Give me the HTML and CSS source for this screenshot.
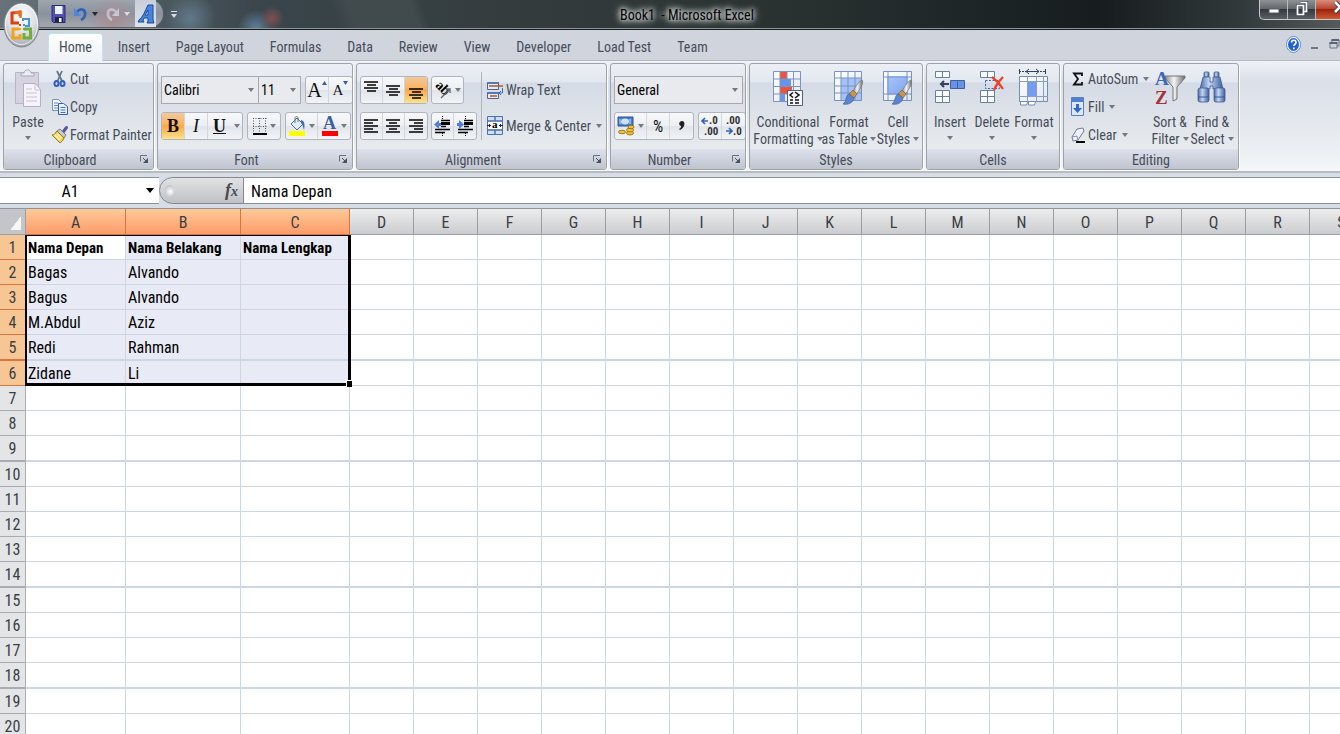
FILE: index.html
```html
<!DOCTYPE html>
<html lang="en">
<head>
<meta charset="utf-8">
<title>Book1 - Microsoft Excel</title>
<link rel="stylesheet" href="styles.css">
</head>
<body>
<svg class="defs" aria-hidden="true">
  <defs>
    <linearGradient id="gCell" x1="0" y1="0" x2="1" y2="1"><stop offset="0" stop-color="#fff"/><stop offset="1" stop-color="#dfe6f2"/></linearGradient>
    <linearGradient id="gSel" x1="0" y1="0" x2="1" y2="1"><stop offset="0" stop-color="#a9c4fa"/><stop offset="1" stop-color="#7ea4ee"/></linearGradient>
    <linearGradient id="gSteel" x1="0" y1="0" x2="1" y2="0"><stop offset="0" stop-color="#8c8c8c"/><stop offset=".45" stop-color="#f4f4f4"/><stop offset="1" stop-color="#6d6d6d"/></linearGradient>
    <linearGradient id="gBarrel" x1="0" y1="0" x2="1" y2="0"><stop offset="0" stop-color="#4b6ba8"/><stop offset=".4" stop-color="#c4d6f6"/><stop offset="1" stop-color="#3d5d9c"/></linearGradient>
    <radialGradient id="gOrb" cx=".5" cy=".3" r=".7"><stop offset="0" stop-color="#fff"/><stop offset=".6" stop-color="#dcdee2"/><stop offset="1" stop-color="#9da2ab"/></radialGradient>
    <symbol id="launcher" viewBox="0 0 9 9"><path d="M.5 6.500V.5H7" fill="none" stroke="#6b7382"/><path d="M3 3l4 4" stroke="#4a5260" fill="none"/><path d="M8 3v5H3z" fill="#4a5260"/></symbol>
    <symbol id="brush" viewBox="0 0 21 27"><path d="M19 1c2 2-1 9-6 14l-3-3C13 7 17 1 19 1z" fill="url(#gSteel)" stroke="#777" stroke-width=".7"/><path d="M10 11l4 4-3 4-5-4z" fill="#c8954e" stroke="#7a5a2c" stroke-width=".7"/><path d="M6 15l5 4c-1 5-6 7-11 6 4-2 2-8 6-10z" fill="#5b86cf" stroke="#3c5f9f" stroke-width=".7"/></symbol>
  </defs>
</svg>

<header class="titlebar">
  <div class="qat">
    <button aria-label="Save"><svg width="15" height="20" viewBox="0 0 15 20"><path d="M1 1.500h13v17H2.500L1 17z" fill="#5150b8" stroke="#2a2a74"/><path d="M4 2h7.500v8H4z" fill="#eef2fb"/><path d="M4 13h8v5H4z" fill="#22224f"/><path d="M8 14h2.500v4H8z" fill="#fff"/></svg></button>
    <button class="tight" aria-label="Undo"><svg width="13" height="16" viewBox="0 0 13 16"><path d="M3 6c4-5 9-2 8 3-.5 3-2 4-4 5" fill="none" stroke="#2f62bd" stroke-width="2.600"/><path d="M0 2v8h7z" fill="#4f86dd"/></svg></button>
    <button class="drop" aria-label="Undo history"><i class="arrow dark"></i></button>
    <button class="tight faded" aria-label="Redo"><svg width="13" height="16" viewBox="0 0 13 16"><path d="M10 6C6 1 1 4 2 9c.5 3 2 4 4 5" fill="none" stroke="#c0bfcb" stroke-width="2.600"/><path d="M13 2v8H6z" fill="#c6c7d1"/></svg></button>
    <button class="drop" aria-label="Redo history"><i class="arrow pale"></i></button>
    <button class="hot" aria-label="Text style"><svg width="18" height="20" viewBox="0 0 18 20"><path d="M11 1h5v15l1 3h-7l1-2v-3H7l-1 2 1 2H1l1-2C6 13 8 7 11 1zm0 5l-3 5h3z" fill="#4384dc" stroke="#1b4a9a"/></svg></button>
  </div>
  <button class="customize" aria-label="Customize toolbar"><i class="bar"></i><i class="arrow pale"></i></button>
  <h1>Book1 &nbsp;- Microsoft Excel</h1>
  <div class="winbtns">
    <button aria-label="Minimize"><svg width="12" height="6" viewBox="0 0 12 6"><path d="M1 1h10v4H1z" fill="#fff" stroke="#555a66"/></svg></button>
    <button aria-label="Restore"><svg width="12" height="15" viewBox="0 0 12 15"><path d="M4.500 1.500h6v9h-2M1.500 4.500h6v9h-6z" fill="none" stroke="#444a58" stroke-width="3"/><path d="M4.500 1.500h6v9h-2M1.500 4.500h6v9h-6z" fill="none" stroke="#fff" stroke-width="1.700"/></svg></button>
    <button class="close" aria-label="Close"><svg width="14" height="12" viewBox="0 0 14 12"><path d="M2 1l10 10M12 1L2 11" stroke="#444a58" stroke-width="4.500"/><path d="M2 1l10 10M12 1L2 11" stroke="#fff" stroke-width="2.500"/></svg></button>
  </div>
</header>
<button class="office" aria-label="Office Button">
  <svg width="37" height="46" viewBox="0 0 37 46"><ellipse cx="18.500" cy="23" rx="17.500" ry="22" fill="url(#gOrb)" stroke="#7d828c"/><ellipse cx="18.500" cy="22.500" rx="16" ry="20" fill="none" stroke="#fff" stroke-opacity=".8"/>
  <g fill="none"><path d="M16 21H9V11l8-1v4" stroke="#d8410e" stroke-width="3"/><path d="M12 10.500h5.500V16" stroke="#f0701f" stroke-width="2.500"/><path d="M20 19v-2h6v7h-4" stroke="#4a93d4" stroke-width="2"/><path d="M16 27h-6v9h7v-4" stroke="#f4a21b" stroke-width="3"/><path d="M21 27h6.500v9H21v-5" stroke="#6fae3a" stroke-width="3"/></g><path d="M16 22h2v2h-2z" fill="#d8410e"/><path d="M20 22h2v2h-2z" fill="#4a93d4"/><path d="M16 26h2v2h-2z" fill="#f4a21b"/><path d="M20 26h2v2h-2z" fill="#6fae3a"/></svg>
</button>

<nav class="tabs">
  <button class="active">Home</button><button>Insert</button><button>Page Layout</button><button>Formulas</button><button>Data</button><button>Review</button><button>View</button><button>Developer</button><button>Load Test</button><button>Team</button>
  <div class="tools">
    <button aria-label="Help"><svg width="15" height="17" viewBox="0 0 15 17"><ellipse cx="7.500" cy="8.500" rx="7" ry="8" fill="#fff" stroke="#5b8fd8"/><ellipse cx="7.500" cy="8.500" rx="5.500" ry="6.500" fill="#2463cf"/><path d="M5.500 6.500c0-3 4.500-3 4.500 0 0 1.800-2.200 1.700-2.200 3.500M7.800 11.500v1.800" fill="none" stroke="#fff" stroke-width="1.600"/></svg></button>
    <button aria-label="Minimize workbook"><svg width="8" height="12" viewBox="0 0 8 12"><path d="M0 9h7v2H0z" fill="#6f7886"/></svg></button>
    <button aria-label="Restore workbook"><svg width="10" height="10" viewBox="0 0 10 10"><path d="M3 3V1h7v6H8M1 4h7v5H1z" fill="none" stroke="#6c7482"/><path d="M2.500 0H10v2H2.500zM.5 3h8v2h-8z" fill="#5d6573"/></svg></button>
  </div>
</nav>

<main>
<section class="ribbon">
  <div class="group clipboard"><div class="body">
    <button class="big"><svg width="28" height="38" viewBox="0 0 28 38"><path d="M1.500 3.500h23v31h-23z" fill="#d6d3e0" stroke="#b9b5c6"/><path d="M7 7h13V4h-3c0-4-7-4-7 0H7z" fill="#eceaf2" stroke="#aaa6b8"/><path d="M9.500 14.500h12l5 6v17h-17z" fill="#f6f4fa" stroke="#b4b0c2"/><path d="M21 15v6h5M12 20h6M12 24h11M12 28h11M12 32h11" stroke="#c6c2d2" fill="none"/></svg><span>Paste</span><i class="arrow"></i></button>
    <div class="stack">
      <button><svg width="14" height="18" viewBox="0 0 14 18"><path d="M4 1l5 10M9 1L4.500 11" stroke="#65788f" stroke-width="1.800"/><ellipse cx="3.500" cy="13.500" rx="2" ry="2.600" fill="none" stroke="#2e5fc0" stroke-width="2"/><ellipse cx="9.500" cy="13.500" rx="2" ry="2.600" fill="none" stroke="#2e5fc0" stroke-width="2"/></svg>Cut</button>
      <button><svg width="16" height="18" viewBox="0 0 16 18"><path d="M.5 1.500h6l3 3v8h-9z" fill="#f4f8ff" stroke="#7a93bd"/><path d="M2 5h4M2 7.500h4M2 10h4" stroke="#5b86cf"/><path d="M6.500 5.500h5l4 3v8h-9z" fill="#e7f0ff" stroke="#385fa8"/><path d="M8.500 9.500h5M8.500 12h5M8.500 14.500h5" stroke="#4478cf"/></svg>Copy</button>
      <button><svg width="16" height="18" viewBox="0 0 16 18"><path d="M14.500 1.500l-3 4" stroke="#5455a0" stroke-width="3" stroke-linecap="round"/><path d="M8 3l6 6-2 3-7-7z" fill="#c9c9d4" stroke="#777"/><path d="M4 6l1-1 7 7c-1 3-3 4-4 5L0 9c2 0 3-1 4-3z" fill="#f2d35c" stroke="#9b7720"/><path d="M3 9l5 5M5.500 8l4 4" stroke="#fff6b8" stroke-width="1.500"/></svg>Format Painter</button>
    </div></div>
    <footer><span>Clipboard</span><button aria-label="Clipboard options"><svg width="9" height="9"><use href="#launcher"/></svg></button></footer>
  </div>

  <div class="group font"><div class="body rows">
    <div class="row">
      <div class="combos"><label class="pick face"><select aria-label="Font"><option>Calibri</option></select><i class="arrow"></i></label><label class="pick size"><select aria-label="Font size"><option>11</option></select><i class="arrow"></i></label></div>
      <div class="set"><button class="serif grow" aria-label="Grow font">A<svg width="5" height="4"><path d="M0 4l2.500-4L5 4z" fill="#2f5fb5"/></svg></button><button class="serif shrink" aria-label="Shrink font">A<svg width="5" height="4"><path d="M0 0l2.500 4L5 0z" fill="#2f5fb5"/></svg></button></div>
    </div>
    <div class="row">
      <div class="set"><button class="serif on"><b>B</b></button><button class="serif"><em>I</em></button><button class="serif flat"><b><u>U</u></b></button><button class="drop" aria-label="Underline styles"><i class="arrow"></i></button></div>
      <div class="set"><button class="split" aria-label="Borders"><svg width="14" height="18" viewBox="0 0 14 18"><path d="M.5 1v15M6.500 1v15M12.500 1v15M0 1.500h14M0 9.500h14" stroke="#555" stroke-dasharray="1 1.500"/><path d="M0 17h14" stroke="#000" stroke-width="2"/></svg><i class="arrow"></i></button></div>
      <div class="set"><button class="split" aria-label="Fill color"><svg width="17" height="20" viewBox="0 0 17 20"><path d="M2 8l6-6 6 6-6 6z" fill="#e2ecf9" stroke="#4c6c9c"/><path d="M6 7V2c0-2 3-2 3 0v4" fill="none" stroke="#6b7380"/><path d="M12 4c4 1 4 5 3 10-1-3-1-5-3-7z" fill="#3c6db8"/><path d="M0 15h16v5H0z" fill="#ff0"/></svg><i class="arrow"></i></button><button class="split" aria-label="Font color"><span class="fontcolor serif">A</span><i class="arrow"></i></button></div>
    </div></div>
    <footer><span>Font</span><button aria-label="Font options"><svg width="9" height="9"><use href="#launcher"/></svg></button></footer>
  </div>

  <div class="group align"><div class="body">
    <div class="rows">
      <div class="row">
        <div class="set"><button aria-label="Top align"><svg width="15" height="20" viewBox="0 0 15 20"><path d="M0 2h14M3 5h9M0 8h14M3 11h9" stroke="#000" stroke-width="1.400"/></svg></button><button aria-label="Middle align"><svg width="15" height="20" viewBox="0 0 15 20"><path d="M0 6h14M3 9h9M0 12h14M3 15h9" stroke="#000" stroke-width="1.400"/></svg></button><button class="on" aria-label="Bottom align"><svg width="15" height="20" viewBox="0 0 15 20"><path d="M0 9h14M3 12h9M0 15h14M3 18h9" stroke="#000" stroke-width="1.400"/></svg></button></div>
        <div class="set"><button class="split orient" aria-label="Orientation"><svg width="17" height="20" viewBox="0 0 17 20"><text x="0" y="11" transform="rotate(45 6 8)" class="glyph ab">ab</text><path d="M6 18l9-9M11 9h4v4" fill="none" stroke="#666" stroke-width="1.400"/></svg><i class="arrow"></i></button></div>
      </div>
      <div class="row">
        <div class="set"><button aria-label="Align left"><svg width="15" height="16"><path d="M0 2h14M0 5h9M0 8h14M0 11h9M0 14h14" stroke="#000" stroke-width="1.400"/></svg></button><button aria-label="Center"><svg width="15" height="16"><path d="M0 2h14M3 5h8M0 8h14M3 11h8M0 14h14" stroke="#000" stroke-width="1.400"/></svg></button><button aria-label="Align right"><svg width="15" height="16"><path d="M0 2h14M5 5h9M0 8h14M5 11h9M0 14h14" stroke="#000" stroke-width="1.400"/></svg></button></div>
        <div class="set"><button aria-label="Decrease indent"><svg width="17" height="20" viewBox="0 0 17 20"><path d="M8.500 0v3M8.500 17v3" stroke="#000" stroke-dasharray="1 1"/><path d="M7 4.500h9M7 10.500h5M1 13.500h15M1 16.500h10" stroke="#000" stroke-width="1.400"/><path d="M7 7.500h9" stroke="#000" stroke-width="3"/><path d="M5 4v3h2v3H5v3L0 8.500z" fill="#4c7fd8"/></svg></button><button aria-label="Increase indent"><svg width="17" height="20" viewBox="0 0 17 20"><path d="M8.500 0v3M8.500 17v3" stroke="#000" stroke-dasharray="1 1"/><path d="M7 4.500h9M7 10.500h5M1 13.500h15M1 16.500h10" stroke="#000" stroke-width="1.400"/><path d="M7 7.500h9" stroke="#000" stroke-width="3"/><path d="M2 4v3H0v3h2v3l5-4.500z" fill="#4c7fd8"/></svg></button></div>
      </div>
    </div>
    <div class="rule"></div>
    <div class="rows links">
      <button><svg width="17" height="19" viewBox="0 0 17 19"><path d="M.5 1.500h11v7H.5zM.5 11.500h11v6H.5z" fill="#e5eaf4" stroke="#4b6491"/><path d="M1 1h11v2H1zM1 11h11v2H1z" fill="#5a78ae"/><path d="M2 5h14M3 15h7" stroke="#a56228" stroke-width="1.500"/><path d="M15.500 7v5h-3M14 10l-2 2 2 2" fill="none" stroke="#3c6db8"/></svg>Wrap Text</button>
      <button><svg width="17" height="20" viewBox="0 0 17 20"><path d="M.5.500h15v18H.5z" fill="#cfdff8" stroke="#4e73ac"/><path d="M8 1v4M8 14v5M1 5h15M1 14h15" stroke="#4e73ac" stroke-width="1.500"/><path d="M1 6h14v7H1z" fill="#fff"/><text x="5" y="12" class="glyph">a</text><path d="M0 9.500h4M12 9.500h4M2.500 8v3M13.500 8v3" stroke="#222"/></svg>Merge &amp; Center<i class="arrow"></i></button>
    </div></div>
    <footer><span>Alignment</span><button aria-label="Alignment options"><svg width="9" height="9"><use href="#launcher"/></svg></button></footer>
  </div>

  <div class="group number"><div class="body rows">
    <label class="pick format"><select aria-label="Number format"><option>General</option></select><i class="arrow"></i></label>
    <div class="row">
      <div class="set"><button class="split" aria-label="Accounting format"><svg width="18" height="20" viewBox="0 0 18 20"><path d="M1 1h15v9H1z" fill="#4b7fd0" stroke="#2c4f91"/><ellipse cx="8" cy="5.500" rx="4" ry="3" fill="#cfe0f8"/><path d="M3 3v5M13 3v5" stroke="#cfe0f8"/><g fill="#f1c232" stroke="#8a6414" stroke-width=".8"><ellipse cx="13" cy="17" rx="3.500" ry="2"/><ellipse cx="13" cy="14" rx="3.500" ry="2"/><ellipse cx="14" cy="11" rx="3" ry="1.800"/><ellipse cx="5" cy="16" rx="3.500" ry="1.800"/></g></svg><i class="arrow"></i></button><button class="pct">%</button><button class="comma" aria-label="Comma style"><svg width="6" height="10" viewBox="0 0 6 10"><path d="M3 0c4 0 3 7-2 9l-1-1c2-1 2-2 2-3C-1 4 0 0 3 0z" fill="#222"/></svg></button></div>
      <div class="set"><button aria-label="Increase decimal"><svg width="18" height="22" viewBox="0 0 18 22"><text x="8" y="9" class="digits">.0</text><text x="3" y="20" class="digits">.00</text><path d="M1 6h6M4 3L1 6l3 3" fill="none" stroke="#2d63c0" stroke-width="1.700"/></svg></button><button aria-label="Decrease decimal"><svg width="18" height="22" viewBox="0 0 18 22"><text x="1" y="9" class="digits">.00</text><text x="8" y="20" class="digits">.0</text><path d="M1 16h6M4 13l3 3-3 3" fill="none" stroke="#2d63c0" stroke-width="1.700"/></svg></button></div>
    </div></div>
    <footer><span>Number</span><button aria-label="Number options"><svg width="9" height="9"><use href="#launcher"/></svg></button></footer>
  </div>

  <div class="group styles"><div class="body">
    <button class="big"><svg width="32" height="38" viewBox="0 0 32 38"><path d="M1.500 2.500h27v30h-27z" fill="url(#gCell)"/><path d="M8 2h7v8H8zM8 17h12v8H8z" fill="#ef5340"/><path d="M8 10h11v7H8zM8 25h5v8H8z" fill="#6794ec"/><path d="M1.500 2.500h27v30h-27zM8 2v31M15 2v8M21.500 2v31M1 10h28M1 17.500h28M1 25h28" fill="none" stroke="#7c95bf"/><path d="M15.500 21.500h15v15h-15z" fill="#f5f7fb" stroke="#555f72"/><path d="M21 23.500l-3 2.500 3 2.500M23 23l4 3-4 3M18 31h3M18 34h3M23 31h4M23 34h4" fill="none" stroke="#111" stroke-width="1.500"/></svg><span>Conditional<br>Formatting<i class="arrow"></i></span></button>
    <button class="big"><svg width="32" height="38" viewBox="0 0 32 38"><path d="M1.500 2.500h27v29h-27z" fill="url(#gCell)"/><path d="M8 9h21v23H8z" fill="#a4c1f8"/><path d="M1.500 2.500h27v29h-27zM8 2v30M15 2v30M22 2v30M1 9h28M1 17h28M1 24h28" fill="none" stroke="#7992bd"/><use href="#brush" x="10" y="10" width="21" height="27"/></svg><span>Format<br>as Table<i class="arrow"></i></span></button>
    <button class="big"><svg width="32" height="38" viewBox="0 0 32 38"><path d="M1.500 2.500h28v29h-28z" fill="url(#gCell)"/><path d="M1.500 2.500h28v29h-28zM6 2v30M25 2v30M1 8h29M1 25h29" fill="none" stroke="#7992bd"/><path d="M6 8h19v17H6z" fill="url(#gSel)" stroke="#6f93d8"/><use href="#brush" x="10" y="10" width="21" height="27"/></svg><span>Cell<br>Styles<i class="arrow"></i></span></button></div>
    <footer><span>Styles</span></footer>
  </div>

  <div class="group cells"><div class="body">
    <button class="big"><svg width="32" height="38" viewBox="0 0 32 38"><path d="M1.500 2.500h14v6h-14zM8.500 2v6M1.500 21.500h14v12h-14zM8.500 21v13M1 27.500h15" fill="#fbfcfe" stroke="#67809f"/><path d="M16.500 11.500h14v8h-14z" fill="#6792e8" stroke="#405f9f"/><path d="M23.500 12v7" stroke="#3f62aa"/><path d="M7 15h8M10 12l-3 3 3 3" fill="none" stroke="#33415c" stroke-width="2"/></svg><span>Insert</span><i class="arrow"></i></button>
    <button class="big"><svg width="32" height="38" viewBox="0 0 32 38"><path d="M4.500 2.500h14v6h-14zM11.500 2v6M4.500 21.500h14v12h-14zM11.500 21v13M4 27.500h15" fill="#fbfcfe" stroke="#67809f"/><path d="M9.500 11.500h14v8h-14z" fill="none" stroke="#3f62aa" stroke-dasharray="2 1.500"/><path d="M16 8c4 3 8 7 11 12M27 8c-4 4-7 8-9 13" fill="none" stroke="#ef3f25" stroke-width="2.200"/></svg><span>Delete</span><i class="arrow"></i></button>
    <button class="big"><svg width="32" height="38" viewBox="0 0 32 38"><path d="M1 2.500h26" stroke="#33415c" stroke-dasharray="2 1"/><path d="M1.500 0v5M27.500 0v5M9 2.500h11M11 0L8 2.500 11 5M18 0l3 2.500L18 5" fill="none" stroke="#33415c"/><path d="M1.500 7.500h28v25h-28z" fill="url(#gCell)" stroke="#758cae"/><path d="M9.500 7v26M18.500 7v26M25.500 7v26M1 12.500h29M1 27.500h29" stroke="#8a9fbe"/><path d="M10 13h8v14h-8z" fill="#749df0"/><path d="M2.500 33v3h6l1-3M10.500 33v3h6l1-3" fill="#fff" stroke="#758cae"/></svg><span>Format</span><i class="arrow"></i></button></div>
    <footer><span>Cells</span></footer>
  </div>

  <div class="group editing"><div class="body">
    <div class="stack">
      <button><svg width="14" height="16" viewBox="0 0 14 16"><path d="M11 5V2.500H3L7 8l-4 5.500h8V11" fill="none" stroke="#111" stroke-width="1.800"/></svg>AutoSum<i class="arrow"></i></button>
      <button><svg width="14" height="20" viewBox="0 0 14 20"><path d="M.5.500h12v18H.5z" fill="#dbe7fb" stroke="#5d7fb9"/><path d="M1 1h11v4H1z" fill="#4f7fd0"/><path d="M5 7h3v4h3l-4.500 5L2 11h3z" fill="#2f67cd"/></svg>Fill<i class="arrow"></i></button>
      <button><svg width="14" height="18" viewBox="0 0 14 18"><path d="M6 3l6-1 1 3-6 9-5 1-1-4z" fill="#eef1f7" stroke="#6f7c93"/><path d="M1 11l5-1 1 4" fill="none" stroke="#8792a8"/><path d="M5 16h9" stroke="#000" stroke-width="2"/></svg>Clear<i class="arrow"></i></button>
    </div>
    <button class="big"><svg width="32" height="38" viewBox="0 0 32 38"><path d="M11 7h20v2l-8 9v12l-4 2V18l-8-9z" fill="url(#gSteel)" stroke="#777"/><text x="1" y="16" class="sort a">A</text><text x="1" y="35" class="sort z">Z</text></svg><span>Sort &amp;<br>Filter<i class="arrow"></i></span></button>
    <button class="big"><svg width="30" height="38" viewBox="0 0 30 38"><g fill="url(#gBarrel)" stroke="#3d5a92" stroke-width=".8"><rect x="7" y="3" width="5" height="5" rx="1"/><rect x="17" y="3" width="5" height="5" rx="1"/><path d="M6 8h7v5h3V8h7l3 12H16v-3h-3v3H3z"/><rect x="1" y="19" width="11" height="14" rx="2"/><rect x="17" y="19" width="11" height="14" rx="2"/></g><path d="M1 28h11M17 28h11" stroke="#3b5890"/></svg><span>Find &amp;<br>Select<i class="arrow"></i></span></button></div>
    <footer><span>Editing</span></footer>
  </div>
</section>

<section class="formula">
  <div class="namebox"><input aria-label="Name box" value="A1"><i class="arrow black"></i></div>
  <button class="fx" aria-label="Insert function"><i class="knob"></i><span>f<small>x</small></span></button>
  <input class="content" aria-label="Formula bar" value="Nama Depan">
</section>

<section class="sheet">
  <table id="grid"></table>
  <div class="selection"></div>
</section>
</main>
<script src="script.js"></script>
</body>
</html>
```
FILE: styles.css
```css
* { box-sizing: border-box; }
body { margin: 0; height: 100vh; overflow: hidden; display: flex; flex-direction: column; background: #fff; color: #464d59; font: 14px/17px "Roboto Condensed", "Liberation Sans Narrow", Lato, sans-serif; }
button { border: 0; margin: 0; padding: 0; background: none; color: inherit; font: inherit; display: flex; align-items: center; justify-content: center; white-space: nowrap; }
input, select { font: inherit; }
svg { display: block; flex: none; overflow: visible; }
.defs { position: absolute; width: 0; height: 0; }

.arrow { display: inline-block; flex: none; width: 0; height: 0; border: 3px solid transparent; border-top: 4px solid #737982; border-bottom: 0; vertical-align: 3px; }
.arrow.dark { border-top-color: #22262c; }
.arrow.pale { border-top-color: #d9dce1; }
.arrow.black { border-width: 5px 4px 0; border-top-color: #000; }

.titlebar { position: relative; flex: none; height: 30px; display: flex; align-items: flex-start; padding-left: 38px; border-bottom: 1px solid #161b1d; box-shadow: inset 0 -1px #8d9696; background: radial-gradient(circle at 190px 18px, #61798a 0, transparent 26px), radial-gradient(circle at 272px 18px, #80504f 0, transparent 12px), radial-gradient(circle at 256px 28px, #5f7f9c 0, transparent 18px), linear-gradient(70deg, transparent 320px, #4b545680 335px, #4b545680 395px, transparent 405px), linear-gradient(90deg, #68727b 0, #3a464c 260px, #353d3f 480px, #2b3332 760px, #222a2b 900px, #171d1f 1100px, #32393a 1240px, #555a5c 100%); }
.qat { height: 28px; width: 126px; flex: none; display: flex; align-items: center; padding: 0 7px 0 13px; border: 1px solid #55606a; border-top: 0; border-left: 0; border-radius: 0 14px 14px 0; background: radial-gradient(circle at 75px 20px, #a88b92, transparent 24px), linear-gradient(#9da5af, #8a929d 50%, #a5a6ae); }
.qat button { height: 27px; flex: none; }
.qat .tight { margin-left: 8px; }
.qat .drop { width: 16px; }
.qat .tight.faded { margin-left: 3px; }
.qat .hot { width: 21px; background: linear-gradient(#c8ced8, #dfe3ea); }
.customize { flex-direction: column; gap: 2px; width: 20px; height: 28px; }
.bar { width: 6px; height: 1px; background: #d9dce1; }
h1 { flex: 1; margin: 0; padding: 7px 0 0 436px; color: #000; font-size: 14px; line-height: 17px; font-weight: 400; white-space: nowrap; text-shadow: 0 0 4px #e5e8e8, 0 0 6px #c9cdcd, 0 0 9px #b0b4b4, 0 0 9px #b0b4b4; }
.winbtns { display: flex; height: 20px; flex: none; overflow: hidden; width: 81px; border: 1px solid #c5c9cc; border-top: 0; border-right: 0; border-radius: 0 0 0 5px; background: linear-gradient(#8e9294, #63686b 45%, #33393c 50%, #5a6063); }
.winbtns button { flex: none; width: 28px; border-right: 1px solid #b5babd; align-items: flex-start; padding-top: 1px; }
.winbtns button:first-child { align-items: flex-end; padding-bottom: 5px; }
.winbtns .close { width: 48px; background: linear-gradient(#d98d7c, #b94730 45%, #9c2310 50%, #cc5a35); }
.office { position: absolute; left: 3px; top: 2px; z-index: 2; }

.tabs { flex: none; height: 31px; display: flex; align-items: flex-end; gap: 4px; padding-left: 48px; background: #cfd4dd; border-bottom: 1px solid #b7babf; }
.tabs > button { height: 28px; padding: 2px 10px 0; border: 1px solid transparent; border-bottom: 0; }
.tabs > .active { margin-bottom: -1px; height: 28px; padding-top: 0; border-color: #bce6ec; border-radius: 4px 4px 0 0; background: linear-gradient(#fff, #eef1f6); }
.tools { margin-left: auto; align-self: stretch; display: flex; align-items: center; gap: 10px; padding: 0 1px 2px 0; }

main { flex: 1; min-height: 0; display: flex; flex-direction: column; }
.ribbon { flex: none; display: flex; gap: 3px; padding: 2px 3px 1px; height: 112px; background: linear-gradient(#f0f2f7, #dbe0e9 18%, #e2e6ed 50%, #edf1f4 85%, #f5f7f9); border-bottom: 2px solid #b8bcc1; }
.group { flex: none; display: flex; flex-direction: column; border: 1px solid #9ea3ab; border-radius: 3px; overflow: hidden; box-shadow: 1px 1px #fff; background: linear-gradient(#eceff5, #e3e7ef 17%, #d5dbe6 18%, #e0e4ea 55%, #ecf1f2); }
.body { flex: 1; display: flex; min-height: 0; }
.group footer { flex: none; height: 20px; display: flex; align-items: center; background: linear-gradient(#dde1ec, #c0c4cf); }
.group footer span { flex: 1; text-align: center; padding-top: 2px; }
.group footer button { width: 17px; height: 20px; }
.clipboard { width: 151px; }
.font { width: 196px; }
.align { width: 251px; }
.number { width: 136px; }
.styles { width: 174px; }
.cells { width: 134px; }
.editing { width: 176px; }

.big { flex-direction: column; justify-content: flex-start; height: 85px; padding-top: 5px; line-height: 17px; }
.big > svg { margin-bottom: 7px; }
.big > .arrow { margin-top: 5px; }
.big span .arrow { margin-left: 3px; }
.stack { display: flex; flex-direction: column; padding-top: 1px; }
.stack button { height: 28px; gap: 2px; justify-content: flex-start; }
.stack button > svg:first-child { width: 16px; }
.stack .arrow { margin-left: 3px; }
.clipboard .big { width: 48px; }
.styles .body { padding-left: 4px; }
.styles .big:nth-child(1) { width: 68px; }
.styles .big:nth-child(2) { width: 54px; }
.styles .big:nth-child(3) { width: 44px; }
.cells .body { padding-left: 2px; }
.cells .big { width: 42px; }
.editing .stack { padding-left: 6px; width: 85px; }
.editing .big { width: 42px; }

.rows { display: flex; flex-direction: column; gap: 8px; }
.group .body.rows { padding: 12px 3px 0; }
.align .body { padding: 12px 3px 0; }
.row { display: flex; gap: 4px; justify-content: space-between; }
.set { display: flex; height: 28px; border: 1px solid #b0b5bd; border-radius: 3px; background: linear-gradient(#f7f8fa, #eceff3 50%, #e1e5eb 52%, #f2f4f6); }
.set button { width: 23px; height: 26px; color: #111; border-right: 1px solid #d3d6db; }
.set button:last-child, .set .flat { border-right: 0; }
.set .on { background: linear-gradient(#f0c99d, #fbb566 40%, #faa746 50%, #fde38d); }
.set .drop { width: 11px; }
.set .split { width: 32px; gap: 3px; }
.serif { font-family: "Liberation Serif", serif; font-size: 18px; }
.grow { font-size: 20px; }
.shrink { font-size: 15px; }
.grow svg, .shrink svg { align-self: flex-start; margin-top: 4px; }
.fontcolor { width: 16px; line-height: 15px; text-align: center; color: #3b5f9f; border-bottom: 5px solid #f00; font-weight: 700; }
.combos { display: flex; }
.pick { display: flex; align-items: center; height: 28px; border: 1px solid #a6abb3; background: #e8eaed; padding-right: 4px; }
.pick select { flex: 1; min-width: 0; appearance: none; border: 0; padding: 0 2px; background: none; color: #000; }
.face { width: 98px; }
.size { width: 42px; border-left: 0; }
.format { width: 129px; }
.align .row { justify-content: flex-start; gap: 3px; }
.align .set button { width: 22px; }
.align .set .orient { width: 31px; }
.rule { width: 1px; height: 68px; background: #b0b5be; margin: -4px 5px 0 4px; }
.links button { height: 28px; gap: 2px; justify-content: flex-start; }
.links .arrow { margin-left: 3px; }
.pct { font-size: 16px; }
.glyph { font: bold 11px "Liberation Serif", serif; }
.ab { font-size: 14px; }
.digits { font: bold 11px "Roboto Condensed", sans-serif; fill: #333; }
.sort { font: bold 19px "Liberation Serif", serif; }
.sort.a { fill: #3d67b5; }
.sort.z { fill: #a3353a; }

.formula { flex: none; height: 35px; display: flex; padding: 4px 0; background: #d7dde7; font-size: 16px; color: #000; }
.formula input { border: 0; padding: 2px 0 0; background: #fff; color: #000; min-width: 0; }
.namebox { width: 159px; flex: none; display: flex; align-items: center; background: #fff; border: 1px solid #8c9097; border-width: 1px 0; padding-right: 5px; }
.formula .namebox input { flex: 1; text-align: center; padding-right: 6px; }
.fx { width: 85px; flex: none; justify-content: space-between; padding: 0 5px; border: 1px solid #85898f; border-radius: 14px 0 0 14px; background: linear-gradient(#e1e2e4, #bfc1c4); color: #464a52; font: italic bold 18px "Liberation Serif", serif; }
.fx small { font-size: 14px; }
.knob { width: 9px; height: 11px; border-radius: 50%; background: radial-gradient(circle at 60% 60%, #fff, #a9adb7); }
.formula .content { flex: 1; border: 1px solid #8c9097; border-width: 1px 0; padding-left: 7px; }

.sheet { flex: 1; min-height: 0; position: relative; overflow: hidden; }
table { border-collapse: separate; border-spacing: 0; table-layout: fixed; width: 1374px; font-size: 16px; line-height: 18px; color: #000; }
.c-head { width: 26px; } .c-a { width: 100px; } .c-b { width: 115px; } .c-c { width: 109px; } .c-n { width: 64px; }
th, td { padding: 2px 0 0; height: 25px; border-right: 1px solid #cdd6e4; border-bottom: 1px solid #cdd6e4; white-space: nowrap; }
td { padding-left: 2px; text-align: left; }
thead th { height: 27px; border-color: #9a9ea5; border-top: 1px solid #8f939a; background: linear-gradient(#ededee, #cbcccf); color: #3a3f46; font-weight: 400; }
thead th.hl { background: linear-gradient(#fdca98, #fd9c69); border-right-color: #d97640; border-bottom-color: #d97640; }
thead th.corner { background: linear-gradient(to bottom right, transparent 50%, #f7f7f8 52%) right 4px bottom 4px / 11px 14px no-repeat, #c3c5c8; }
tbody th { background: #e4e5e7; border-color: #a9adb3; color: #3a3f46; font-weight: 400; }
tbody th.hl { background: #f6c794; border-color: #d97640; }
tr.thick th, tr.thick td { height: 26px; border-bottom-width: 2px; }
td.sel { background: #e8ebf5; }
.bold td { font-weight: 700; font-size: 15px; }
.selection { position: absolute; left: 25px; top: 27px; width: 326px; height: 151px; border: 3px solid #000; border-width: 1px 3px 3px 2px; }
.selection::after { content: ""; position: absolute; right: -4px; bottom: -4px; width: 5px; height: 6px; background: #000; box-shadow: -1px -1px #fff; }
```
FILE: script.js
```js
const letters = [..."ABCDEFGHIJKLMNOPQRS"];
const data = [
  ["Nama Depan", "Nama Belakang", "Nama Lengkap"],
  ["Bagas", "Alvando"],
  ["Bagus", "Alvando"],
  ["M.Abdul", "Aziz"],
  ["Redi", "Rahman"],
  ["Zidane", "Li"],
];
const thickRows = [5, 9, 14, 18];
const widths = ["c-head", "c-a", "c-b", "c-c"];

let html = "<colgroup>";
for (let i = 0; i <= letters.length; i++) html += `<col class="${widths[i] || "c-n"}">`;
html += '</colgroup><thead><tr><th class="corner" aria-label="Select all"></th>';
letters.forEach((l, i) => { html += `<th class="${i < 3 ? "hl" : ""}">${l}</th>`; });
html += "</tr></thead><tbody>";
for (let r = 1; r <= 20; r++) {
  html += `<tr class="${thickRows.includes(r) ? "thick" : ""}${r === 1 ? "bold" : ""}"><th class="${r <= 6 ? "hl" : ""}">${r}</th>`;
  letters.forEach((_, c) => {
    const selected = r <= 6 && c < 3 && !(r === 1 && c === 0);
    html += `<td class="${selected ? "sel" : ""}">${(data[r - 1] || [])[c] || ""}</td>`;
  });
  html += "</tr>";
}
document.getElementById("grid").innerHTML = html + "</tbody>";
```
